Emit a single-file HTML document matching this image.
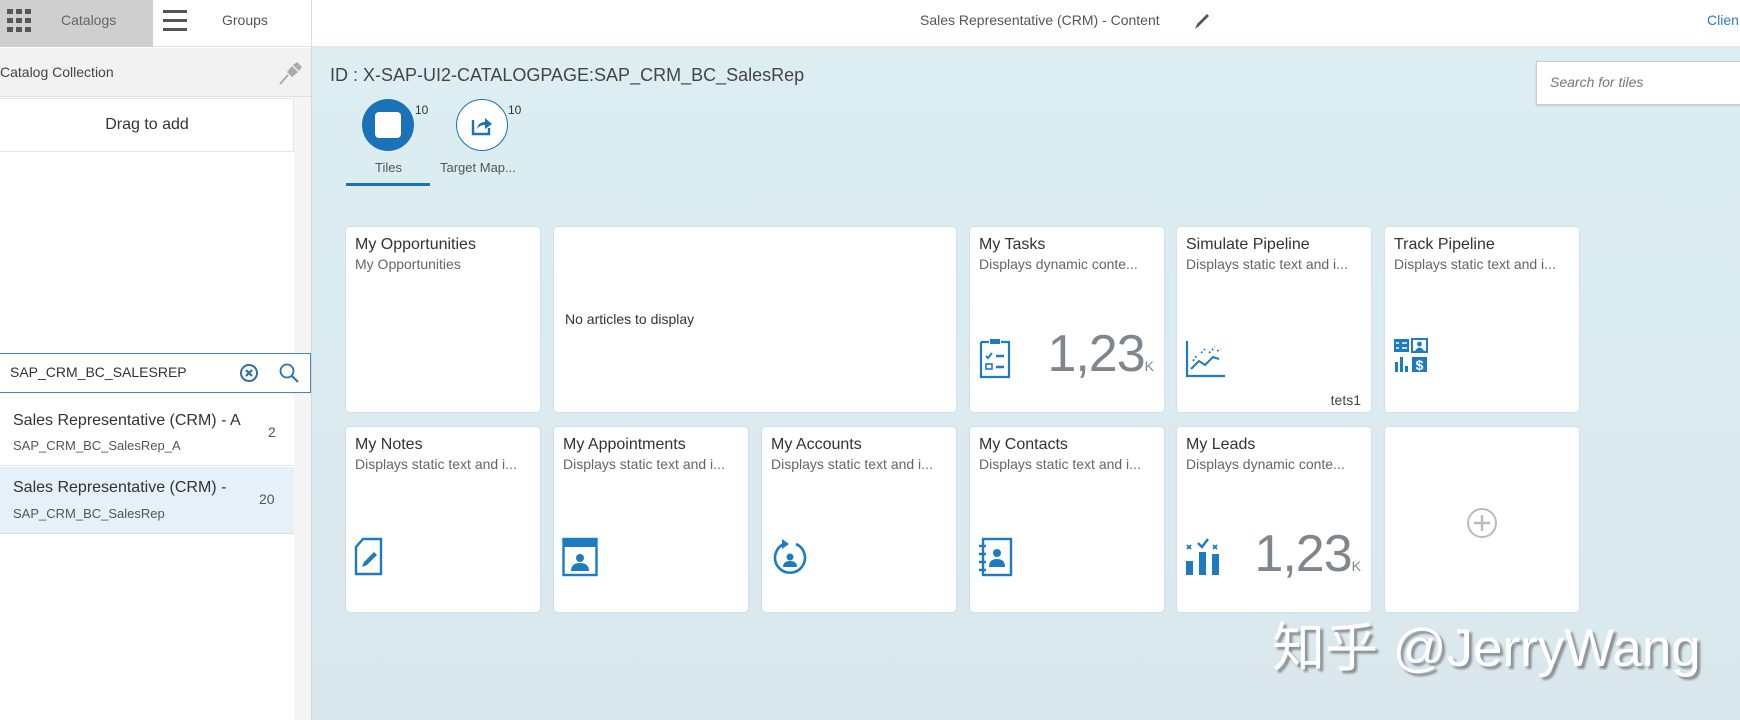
<!DOCTYPE html>
<html><head><meta charset="utf-8"><style>
*{box-sizing:border-box;margin:0;padding:0}
body{width:1740px;height:720px;overflow:hidden;font-family:"Liberation Sans",Arial,sans-serif;background:#fff;position:relative;color:#333}
.abs{position:absolute}
.top{left:0;top:0;width:1740px;height:47px;background:#fff;border-bottom:1px solid #e3e3e3}
.main{left:311px;top:47px;width:1429px;height:673px;background:linear-gradient(#dceef2,#dae8ee);border-left:1px solid #d8d8d8}
.tile{position:absolute;width:194px;height:185px;background:#fff;border-radius:4px;box-shadow:0 0 2px rgba(0,0,0,.12)}
.tile .t{position:absolute;left:9px;top:9px;font-size:16px;color:#333;white-space:nowrap}
.tile .s{position:absolute;left:9px;top:29px;font-size:14px;color:#666;white-space:nowrap}
.tile svg{position:absolute;left:8px;top:108px}
.num{position:absolute;right:10px;top:97px;font-size:52px;color:#7f878c;letter-spacing:-1px}
.num small{font-size:14px;letter-spacing:0}
</style></head><body>
<div class="abs top"></div>
<div class="abs" style="left:0;top:0;width:153px;height:47px;background:#cfcfcf"></div>
<svg class="abs" style="left:7px;top:9px" width="24" height="24" viewBox="0 0 24 24" fill="#555"><rect x="0" y="0" width="6" height="5"/><rect x="9" y="0" width="6" height="5"/><rect x="18" y="0" width="6" height="5"/><rect x="0" y="9" width="6" height="5"/><rect x="9" y="9" width="6" height="5"/><rect x="18" y="9" width="6" height="5"/><rect x="0" y="18" width="6" height="5"/><rect x="9" y="18" width="6" height="5"/><rect x="18" y="18" width="6" height="5"/></svg>
<div class="abs" style="left:61px;top:12px;font-size:14px;color:#666">Catalogs</div>
<svg class="abs" style="left:163px;top:9px" width="24" height="24" viewBox="0 0 24 24" fill="#555"><rect x="0" y="1" width="24" height="3"/><rect x="0" y="10" width="24" height="3"/><rect x="0" y="19" width="24" height="3"/></svg>
<div class="abs" style="left:222px;top:12px;font-size:14px;color:#555">Groups</div>
<div class="abs" style="left:311px;top:0;width:1px;height:47px;background:#ddd"></div>
<div class="abs" style="left:920px;top:12px;font-size:14px;color:#555">Sales Representative (CRM) - Content</div>
<svg class="abs" style="left:1192px;top:12px" width="20" height="20" viewBox="0 0 20 20"><path d="M3 17 L5 12 L15 2 L17 4 L7 14 Z" fill="#555"/></svg>
<div class="abs" style="left:1707px;top:12px;font-size:14px;color:#2b7cc0">Clien</div>

<!-- left panel -->
<div class="abs" style="left:0;top:47px;width:311px;height:673px;background:#fff"></div>
<div class="abs" style="left:294px;top:97px;width:17px;height:623px;background:#f5f5f5"></div>
<div class="abs" style="left:0;top:48px;width:311px;height:49px;background:#f2f2f2;border-bottom:1px solid #e0e0e0"></div>
<div class="abs" style="left:0;top:64px;font-size:14px;color:#444">Catalog Collection</div>
<svg class="abs" style="left:278px;top:60px" width="26" height="26" viewBox="0 0 26 26"><path d="M2 24 L10 15" stroke="#aaa" stroke-width="2"/><path d="M9 12 L14 17 L20 12 L14 6 Z M15 5 L21 11 L24 7 L19 2 Z" fill="#aaa"/></svg>
<div class="abs" style="left:0;top:98px;width:294px;height:54px;background:#fff;border:1px solid #e5e5e5;border-left:none"></div>
<div class="abs" style="left:0;top:116px;width:294px;text-align:center;font-size:16px;color:#333">Drag to add</div>
<div class="abs" style="left:-2px;top:353px;width:313px;height:40px;background:#fff;border:1px solid #3f89bc"></div>
<div class="abs" style="left:10px;top:364px;font-size:14px;color:#333">SAP_CRM_BC_SALESREP</div>
<svg class="abs" style="left:239px;top:363px" width="20" height="20" viewBox="0 0 20 20"><circle cx="10" cy="10" r="8" fill="none" stroke="#2b6fb0" stroke-width="2"/><path d="M7 7 L13 13 M13 7 L7 13" stroke="#2b6fb0" stroke-width="2.2"/></svg>
<svg class="abs" style="left:278px;top:362px" width="22" height="22" viewBox="0 0 22 22"><circle cx="9" cy="9" r="6.5" fill="none" stroke="#2b6fb0" stroke-width="1.8"/><path d="M14 14 L20 20" stroke="#2b6fb0" stroke-width="2"/></svg>
<div class="abs" style="left:0;top:402px;width:294px;height:64px;background:#fff;border-bottom:1px solid #e8e8e8"></div>
<div class="abs" style="left:13px;top:412px;font-size:16px;color:#333">Sales Representative (CRM) - A</div>
<div class="abs" style="left:13px;top:438px;font-size:13px;color:#555">SAP_CRM_BC_SalesRep_A</div>
<div class="abs" style="left:268px;top:424px;font-size:14px;color:#555">2</div>
<div class="abs" style="left:0;top:467px;width:294px;height:67px;background:#e6f0f8;border-bottom:1px solid #dde"></div>
<div class="abs" style="left:13px;top:479px;font-size:16px;color:#333">Sales Representative (CRM) -</div>
<div class="abs" style="left:13px;top:506px;font-size:13px;color:#555">SAP_CRM_BC_SalesRep</div>
<div class="abs" style="left:259px;top:491px;font-size:14px;color:#555">20</div>

<!-- main -->
<div class="abs main"></div>
<div class="abs" style="left:330px;top:65px;font-size:18px;color:#444">ID : X-SAP-UI2-CATALOGPAGE:SAP_CRM_BC_SalesRep</div>
<div class="abs" style="left:1536px;top:61px;width:210px;height:44px;background:#fff;border:1px solid #ccc;box-shadow:0 1px 2px rgba(0,0,0,.15)"></div>
<div class="abs" style="left:1550px;top:74px;font-size:14px;font-style:italic;color:#777">Search for tiles</div>
<div class="abs" style="left:362px;top:99px;width:52px;height:52px;border-radius:50%;background:#1a72b8"></div>
<div class="abs" style="left:375px;top:112px;width:26px;height:26px;border-radius:4px;background:#fff"></div>
<div class="abs" style="left:415px;top:103px;font-size:12px;color:#333">10</div>
<div class="abs" style="left:456px;top:99px;width:52px;height:52px;border-radius:50%;background:#fff;border:1px solid #1a72b8"></div>
<svg class="abs" style="left:470px;top:113px" width="24" height="24" viewBox="0 0 24 24"><path d="M3 7 V21 H19 V15" fill="none" stroke="#1a72b8" stroke-width="2.4"/><path d="M7 16 C8 10 12 9 15 9 V5 L22 11 L15 16 V12 C12 12 9 13 7 16Z" fill="#1a72b8"/></svg>
<div class="abs" style="left:508px;top:103px;font-size:12px;color:#333">10</div>
<div class="abs" style="left:375px;top:160px;font-size:13px;color:#555">Tiles</div>
<div class="abs" style="left:440px;top:160px;font-size:13px;color:#555">Target Map...</div>
<div class="abs" style="left:346px;top:183px;width:84px;height:3px;background:#1a72b8"></div>

<!-- row 1 -->
<div class="tile" style="left:346px;top:227px"><div class="t">My Opportunities</div><div class="s">My Opportunities</div></div>
<div class="tile" style="left:554px;top:227px;width:402px"><div class="abs" style="left:11px;top:84px;font-size:14px;color:#333">No articles to display</div></div>
<div class="tile" style="left:970px;top:227px"><div class="t">My Tasks</div><div class="s">Displays dynamic conte...</div>
<svg width="34" height="42" viewBox="0 0 34 42" style="top:110px"><path d="M3 5 H11 M23 5 H31 V40 H3 V5" fill="none" stroke="#1c7bc2" stroke-width="2.2"/><path d="M12 2 H22 V7 H12Z" fill="#1c7bc2"/><path d="M8 19 L10 21 L14 16" fill="none" stroke="#1c7bc2" stroke-width="2"/><path d="M18 19 H26 M18 30 H26" stroke="#1c7bc2" stroke-width="2.4"/><rect x="8" y="27" width="6" height="5" fill="none" stroke="#1c7bc2" stroke-width="1.6"/></svg>
<div class="num">1,23<small>K</small></div></div>
<div class="tile" style="left:1177px;top:227px"><div class="t">Simulate Pipeline</div><div class="s">Displays static text and i...</div>
<svg width="42" height="40" viewBox="0 0 42 40" style="top:112px"><path d="M2 2 V37 H40" fill="none" stroke="#1c7bc2" stroke-width="2.2"/><path d="M6 30 L14 22 L20 26 L28 18 L34 20" fill="none" stroke="#1c7bc2" stroke-width="2"/><path d="M8 22 L12 16 M16 14 L20 10 M24 14 L30 8 M32 12 L36 10" stroke="#1c7bc2" stroke-width="1.6" stroke-dasharray="2 2"/></svg>
<div class="abs" style="right:10px;top:165px;font-size:14px;color:#444">tets1</div></div>
<div class="tile" style="left:1385px;top:227px"><div class="t">Track Pipeline</div><div class="s">Displays static text and i...</div>
<svg width="40" height="40" viewBox="0 0 40 40" style="top:111px"><rect x="1" y="1" width="15" height="13" fill="#1c7bc2"/><path d="M3 5 H6 M9 5 H14 M3 10 H6 M9 10 H14" stroke="#fff" stroke-width="1.6"/><rect x="19" y="1" width="15" height="13" fill="none" stroke="#1c7bc2" stroke-width="2"/><circle cx="26.5" cy="6" r="2.4" fill="#1c7bc2"/><path d="M22 13 Q26.5 6 31 13Z" fill="#1c7bc2"/><rect x="2" y="24" width="3" height="10" fill="#1c7bc2"/><rect x="7" y="19" width="3" height="15" fill="#1c7bc2"/><rect x="12" y="28" width="3" height="6" fill="#1c7bc2"/><rect x="19" y="19" width="15" height="15" fill="#1c7bc2"/><text x="26.5" y="32" font-size="14" font-weight="bold" fill="#fff" text-anchor="middle" font-family="Liberation Sans">$</text></svg></div>

<!-- row 2 -->
<div class="tile" style="left:346px;top:427px"><div class="t">My Notes</div><div class="s">Displays static text and i...</div>
<svg width="30" height="40" viewBox="0 0 30 40" style="top:110px"><path d="M9 2 H27 V37 H2 V10 Z" fill="none" stroke="#1c7bc2" stroke-width="2.4"/><path d="M8 30 L10 25 L20 15 L23 18 L13 28Z" fill="#1c7bc2"/></svg></div>
<div class="tile" style="left:554px;top:427px"><div class="t">My Appointments</div><div class="s">Displays static text and i...</div>
<svg width="36" height="40" viewBox="0 0 36 40" style="top:110px"><rect x="1.5" y="2" width="33" height="36" fill="none" stroke="#1c7bc2" stroke-width="2.4"/><rect x="1.5" y="2" width="33" height="8" fill="#1c7bc2"/><circle cx="18" cy="21" r="4" fill="#1c7bc2"/><path d="M9 34 Q9 26 18 26 Q27 26 27 34Z" fill="#1c7bc2"/></svg></div>
<div class="tile" style="left:762px;top:427px"><div class="t">My Accounts</div><div class="s">Displays static text and i...</div>
<svg width="40" height="40" viewBox="0 0 40 40" style="top:111px"><path d="M14 6 A15 15 0 1 0 26 6" fill="none" stroke="#1c7bc2" stroke-width="2.6"/><path d="M12 1 L19 6 L12 11Z" fill="#1c7bc2"/><circle cx="20" cy="19" r="3.5" fill="#1c7bc2"/><path d="M13 29 Q13 23 20 23 Q27 23 27 29Z" fill="#1c7bc2"/></svg></div>
<div class="tile" style="left:970px;top:427px"><div class="t">My Contacts</div><div class="s">Displays static text and i...</div>
<svg width="36" height="40" viewBox="0 0 36 40" style="top:110px"><rect x="5" y="2" width="28" height="36" fill="none" stroke="#1c7bc2" stroke-width="2.4"/><path d="M1 9 H8 M1 17 H8 M1 25 H8 M1 33 H8" stroke="#1c7bc2" stroke-width="2.4"/><circle cx="19" cy="16" r="4" fill="#1c7bc2"/><path d="M11 30 Q11 22 19 22 Q27 22 27 30Z" fill="#1c7bc2"/></svg></div>
<div class="tile" style="left:1177px;top:427px"><div class="t">My Leads</div><div class="s">Displays dynamic conte...</div>
<svg width="36" height="40" viewBox="0 0 36 40" style="top:110px"><path d="M2 8 L6 12 M6 8 L2 12 M28 8 L32 12 M32 8 L28 12" stroke="#1c7bc2" stroke-width="1.8"/><path d="M13 6 L17 10 L23 2" fill="none" stroke="#1c7bc2" stroke-width="2.4"/><rect x="1" y="24" width="7" height="14" fill="#1c7bc2"/><rect x="14" y="15" width="7" height="23" fill="#1c7bc2"/><rect x="27" y="17" width="7" height="21" fill="#1c7bc2"/></svg>
<div class="num">1,23<small>K</small></div></div>
<div class="tile" style="left:1385px;top:427px">
<svg width="32" height="32" viewBox="0 0 32 32" style="left:81px;top:80px"><circle cx="16" cy="16" r="14" fill="none" stroke="#bbb" stroke-width="2"/><path d="M16 8 V24 M8 16 H24" stroke="#bbb" stroke-width="2.4"/></svg></div>

<div class="abs" style="left:1272px;top:606px;font-size:53px;color:#fff;font-family:'Liberation Sans','Noto Sans CJK SC',sans-serif;text-shadow:3px 3px 2px #8a8f93;white-space:nowrap">知乎 @JerryWang</div>
</body></html>
